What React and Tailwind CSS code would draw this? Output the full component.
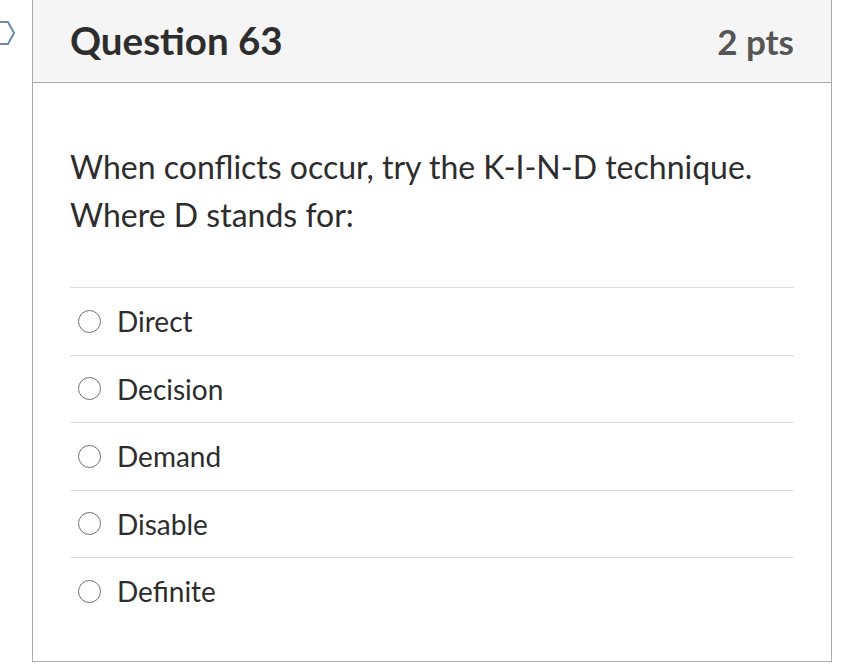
export default function App() {
  const answers = ["Direct", "Decision", "Demand", "Disable", "Definite"];

  return (
    <div className="relative h-[672px] w-[846px] overflow-hidden bg-white font-['Lato',sans-serif]">
      <svg
        className="absolute left-0 top-[18px] h-[30px] w-[18px]"
        viewBox="0 0 18 30"
        fill="none"
        stroke="#6d8cab"
        strokeWidth="2"
        strokeLinejoin="round"
      >
        <path d="M-4 4H8L14 15L8 26H-4" />
      </svg>

      <div className="ml-[32px] -mt-px w-[800px] border border-[#aaaaaa]">
        <div className="flex h-[83px] items-center justify-between border-b border-[#aaaaaa] bg-[#f5f5f5] pl-[37px] pr-[37px]">
          <h2 className="text-[38.5px] font-bold text-[#2d2d2d]">Question 63</h2>
          <span className="text-[35px] font-bold text-[#555555]">2 pts</span>
        </div>

        <div className="px-[37px] pb-[36px] pt-[60px]">
          <p className="text-[32px] leading-[48px] text-[#2d2d2d]">
            When conflicts occur, try the K-I-N-D technique.
            <br />
            Where D stands for:
          </p>

          <div className="mt-[48px]">
            {answers.map((a) => (
              <div
                key={a}
                className="flex h-[67.5px] items-center border-t border-[#dddddd] pl-[8px]"
              >
                <span className="h-[23px] w-[23px] shrink-0 rounded-full border-[1.5px] border-[#707070]" />
                <span className="ml-[16px] text-[28px] text-[#2d2d2d]">{a}</span>
              </div>
            ))}
          </div>
        </div>
      </div>
    </div>
  );
}
